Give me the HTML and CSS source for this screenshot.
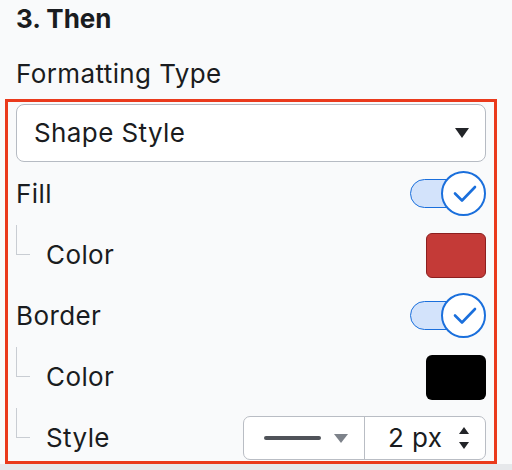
FILE: index.html
```html
<!DOCTYPE html>
<html lang="en">
<head>
    <meta charset="UTF-8">
    <meta name="viewport" content="width=device-width, initial-scale=1.0">
    <title>Formatting Rule</title>
    <link rel="stylesheet" href="styles.css">
</head>
<body>
    <div class="panel">
        <h2 class="step-title">3. Then</h2>
        <div class="field-label">Formatting Type</div>

        <div class="format-box">
            <div class="select">
                <span>Shape Style</span>
                <span class="select-arrow"></span>
            </div>

            <div class="row">
                <span class="row-label">Fill</span>
                <div class="toggle">
                    <span class="toggle-track"></span>
                    <span class="toggle-knob">
                        <svg width="26" height="20" viewBox="0 0 26 20">
                            <path d="M3 9.5 L10 16.5 L23 3" fill="none" stroke="#1a6fdc" stroke-width="2.6" stroke-linecap="round" stroke-linejoin="round"/>
                        </svg>
                    </span>
                </div>
            </div>

            <div class="row">
                <span class="tree"></span>
                <span class="row-label">Color</span>
                <span class="swatch swatch-red"></span>
            </div>

            <div class="row">
                <span class="row-label">Border</span>
                <div class="toggle">
                    <span class="toggle-track"></span>
                    <span class="toggle-knob">
                        <svg width="26" height="20" viewBox="0 0 26 20">
                            <path d="M3 9.5 L10 16.5 L23 3" fill="none" stroke="#1a6fdc" stroke-width="2.6" stroke-linecap="round" stroke-linejoin="round"/>
                        </svg>
                    </span>
                </div>
            </div>

            <div class="row">
                <span class="tree"></span>
                <span class="row-label">Color</span>
                <span class="swatch swatch-black"></span>
            </div>

            <div class="row">
                <span class="tree"></span>
                <span class="row-label">Style</span>
                <div class="stepper">
                    <div class="line-pick">
                        <span class="line-sample"></span>
                        <span class="line-arrow"></span>
                    </div>
                    <div class="size-pick">
                        <span>2 px</span>
                        <span class="spin">
                            <span class="spin-up"></span>
                            <span class="spin-down"></span>
                        </span>
                    </div>
                </div>
            </div>
        </div>
    </div>
    <div class="footer-strip"></div>
</body>
</html>
```

FILE: styles.css
```css
body {
    margin: 0;
    padding: 0;
    background-color: #f9fafb;
    color: #1a1c20;
    font-family: Inter, "Noto Sans", sans-serif;
    font-size: 26px;
    line-height: 32px;
    letter-spacing: 0.4px;
}

.panel {
    height: 464px;
}

.step-title {
    margin: 0;
    padding: 3px 0 0 16px;
    font-size: 26px;
    font-weight: 700;
    line-height: 32px;
    letter-spacing: 0;
}

.field-label {
    margin-top: 23px;
    padding-left: 16px;
}

.format-box {
    box-sizing: border-box;
    width: 492px;
    margin: 9px 0 0 5px;
    border: 3px solid #ea3a1c;
    padding: 2px 8px 0;
}

.select {
    box-sizing: border-box;
    height: 58px;
    display: flex;
    align-items: center;
    justify-content: space-between;
    padding: 0 16px 0 17px;
    background-color: #ffffff;
    border: 1.5px solid #b6bbc3;
    border-radius: 8px;
}

.select-arrow {
    width: 0;
    height: 0;
    border-left: 7.5px solid transparent;
    border-right: 7.5px solid transparent;
    border-top: 10px solid #222428;
}

.row {
    height: 46px;
    margin-top: 15px;
    display: flex;
    align-items: center;
}

.select + .row {
    margin-top: 9px;
}

.row-label {
    flex: 1;
}

.tree {
    box-sizing: border-box;
    align-self: flex-start;
    width: 14px;
    height: 30px;
    margin: -7px 16px 0 0;
    border-left: 1.5px solid #c9cdd3;
    border-bottom: 1.5px solid #c9cdd3;
}

.toggle {
    position: relative;
    width: 76px;
    height: 46px;
}

.toggle-track {
    position: absolute;
    left: 0;
    top: 8px;
    box-sizing: border-box;
    width: 60px;
    height: 29px;
    background-color: #d3e3fb;
    border: 1.5px solid #1a6fdc;
    border-radius: 15px;
}

.toggle-knob {
    position: absolute;
    right: 0;
    top: 0;
    box-sizing: border-box;
    width: 45px;
    height: 45px;
    display: flex;
    align-items: center;
    justify-content: center;
    background-color: #ffffff;
    border: 2px solid #1a6fdc;
    border-radius: 50%;
}

.toggle-knob svg {
    margin: 1px 0 0 2px;
}

.swatch {
    box-sizing: border-box;
    width: 60px;
    height: 45px;
    border-radius: 6px;
}

.swatch-red {
    background-color: #c43a37;
    border: 1px solid #8c1f1f;
}

.swatch-black {
    background-color: #000000;
}

.stepper {
    box-sizing: border-box;
    width: 243px;
    height: 44px;
    display: flex;
    background-color: #ffffff;
    border: 1.5px solid #b9bdc4;
    border-radius: 7px;
}

.line-pick {
    box-sizing: border-box;
    width: 121px;
    display: flex;
    align-items: center;
    padding-left: 20px;
    border-right: 1.5px solid #b9bdc4;
}

.line-sample {
    width: 57px;
    height: 4px;
    background-color: #505359;
    border-radius: 2px;
}

.line-arrow {
    margin-left: 13px;
    width: 0;
    height: 0;
    border-left: 7px solid transparent;
    border-right: 7px solid transparent;
    border-top: 9px solid #7d828a;
}

.size-pick {
    flex: 1;
    display: flex;
    align-items: center;
    justify-content: space-between;
    padding: 0 16px 0 23px;
}

.spin {
    display: flex;
    flex-direction: column;
    gap: 8px;
}

.spin-up {
    width: 0;
    height: 0;
    border-left: 5.5px solid transparent;
    border-right: 5.5px solid transparent;
    border-bottom: 7.5px solid #222428;
}

.spin-down {
    width: 0;
    height: 0;
    border-left: 5.5px solid transparent;
    border-right: 5.5px solid transparent;
    border-top: 7.5px solid #222428;
}

.footer-strip {
    height: 6px;
    background-color: #e6e8eb;
}
```
